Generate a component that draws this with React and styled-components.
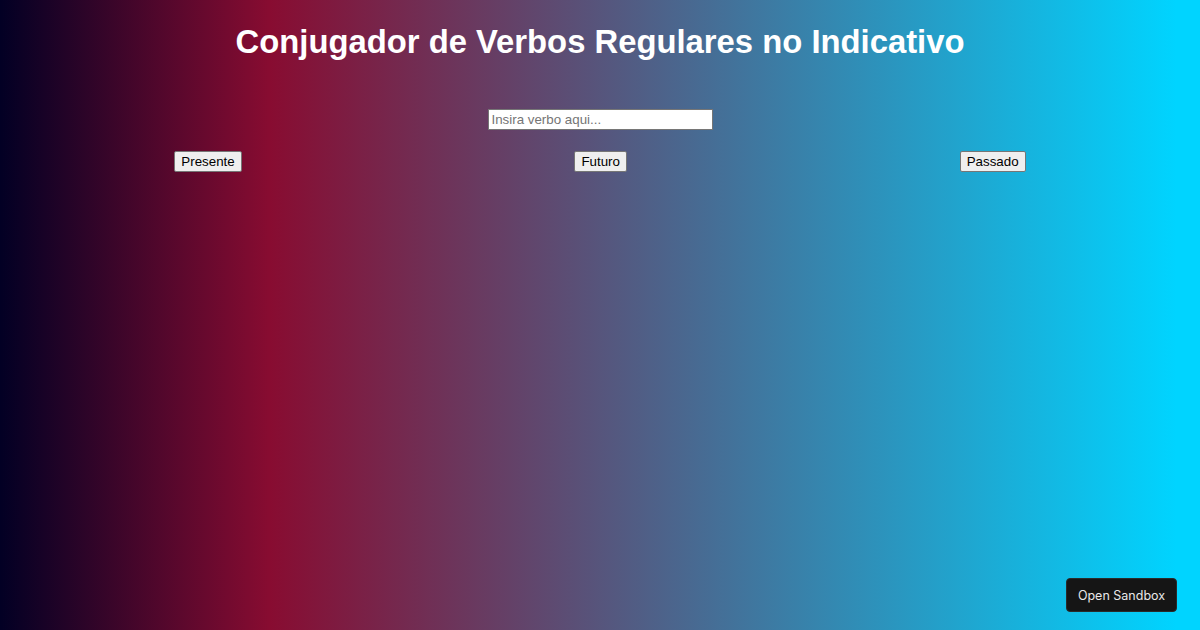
import React, {useState} from "react";
import styled, {createGlobalStyle} from "styled-components";

const GlobalStyle = createGlobalStyle`
    html, body {
        height: 100%;
    }
    body {
        margin: 8px;
        font-family: "Liberation Sans", Arial, sans-serif;
        background: linear-gradient(90deg, #020024 0%, #880c31 22.5%, #00d4ff 98%);
        background-attachment: fixed;
        min-height: 100vh;
        box-sizing: border-box;
    }
`;

const Title = styled.h1`
    margin: 15px 0 0;
    text-align: center;
    color: #ffffff;
    font-size: 32.8px;
    font-weight: bold;
    line-height: 37px;
`;

const Search = styled.div`
    display: flex;
    justify-content: center;
    margin-top: 49px;
`;

const VerbInput = styled.input`
    width: 225px;
    height: 21px;
    box-sizing: border-box;
    padding: 1px 3px;
    border: 1px solid #767676;
    border-radius: 0;
    font-family: "Liberation Sans", Arial, sans-serif;
    font-size: 13.33px;
    &::placeholder {
        color: #757575;
    }
`;

const TenseRow = styled.div`
    display: flex;
    justify-content: space-around;
    margin-top: 21px;
`;

const TenseButton = styled.button`
    height: 21px;
    padding: 1px 6px;
    border: 1px solid #767676;
    border-radius: 2px;
    background: #efefef;
    color: #000;
    font-family: "Liberation Sans", Arial, sans-serif;
    font-size: 13.33px;
`;

const SandboxButton = styled.button`
    position: fixed;
    right: 23px;
    bottom: 18px;
    width: 111px;
    height: 34px;
    border: 1px solid #2a2a2a;
    border-radius: 4px;
    background: #151515;
    color: #e8e8e8;
    font-family: Inter, "Liberation Sans", sans-serif;
    font-size: 12.5px;
`;

const tenses = ["Presente", "Futuro", "Passado"];

export default function App() {
    const [verb, setVerb] = useState("");
    return (
        <>
            <GlobalStyle />
            <Title>Conjugador de Verbos Regulares no Indicativo</Title>
            <Search>
                <VerbInput
                    type="text"
                    value={verb}
                    placeholder="Insira verbo aqui..."
                    onChange={e => setVerb(e.target.value)}
                />
            </Search>
            <TenseRow>
                {tenses.map(t => (
                    <TenseButton key={t}>{t}</TenseButton>
                ))}
            </TenseRow>
            <SandboxButton>Open Sandbox</SandboxButton>
        </>
    );
}
